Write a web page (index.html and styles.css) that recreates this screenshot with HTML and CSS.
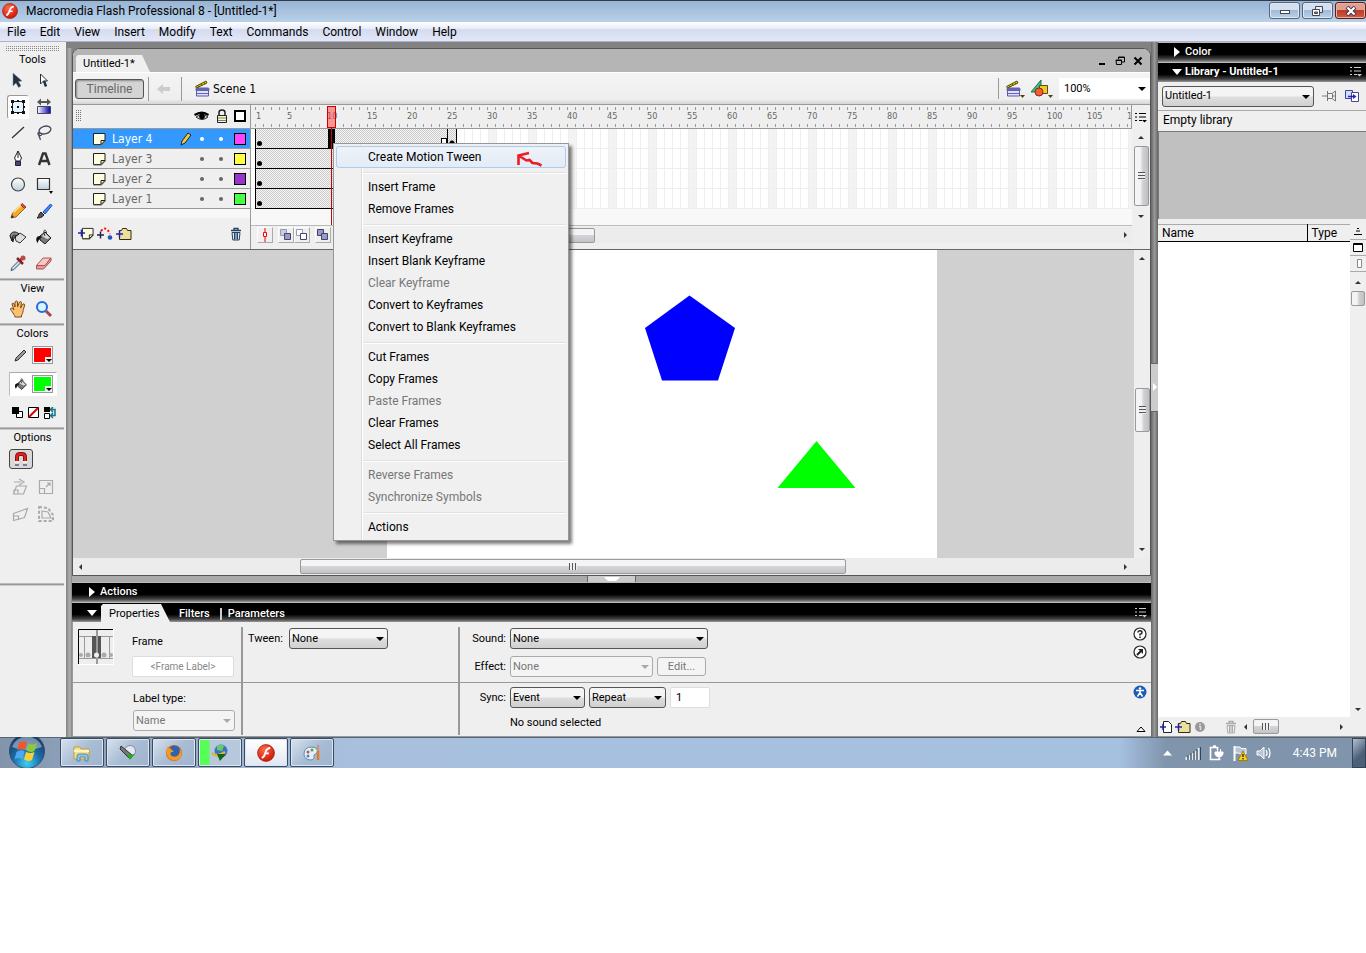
FILE: index.html
```html
<!DOCTYPE html>
<html lang="en">
<head>
<meta charset="utf-8">
<title>Macromedia Flash Professional 8 - [Untitled-1*]</title>
<link rel="stylesheet" href="styles.css">
</head>
<body>
<svg class="defs" aria-hidden="true">
  <defs>
    <linearGradient id="g-blue" x1="0" x2="1"><stop offset="0" stop-color="#fff"/><stop offset="1" stop-color="#00a"/></linearGradient>
    <linearGradient id="g-glass" x1="0" y1="0" x2="0" y2="1"><stop offset="0" stop-color="#fff"/><stop offset="1" stop-color="#bcd0dc"/></linearGradient>
    <radialGradient id="g-orb" cx=".5" cy=".85" r=".8"><stop offset="0" stop-color="#3fd0f4"/><stop offset=".5" stop-color="#1b6ca8"/><stop offset="1" stop-color="#17375e"/></radialGradient>
    <radialGradient id="g-red" cx=".4" cy=".3" r=".8"><stop offset="0" stop-color="#ff6a4a"/><stop offset="1" stop-color="#c80c00"/></radialGradient>
    <symbol id="flash" viewBox="0 0 16 16"><circle cx="8" cy="8" r="7.5" fill="url(#g-red)" stroke="#a01000" stroke-width=".6"/><path d="M11.8 3.6C8.6 3.6 8 6 7.3 8.2 6.7 10.300 6 12 4.200 12.200" fill="none" stroke="#fff" stroke-width="1.700"/><path d="M7.500 8.300h3" stroke="#fff" stroke-width="1.600"/></symbol>
    <symbol id="layer" viewBox="0 0 14 14"><path d="M1.500 1.500h11.500v7l-4 4H1.500z" fill="#fffde0" stroke="#222"/><path d="M13 8.500l-4 4V8.500z" fill="#fff8b0" stroke="#222"/><path d="M1.500 13.200h8l4.200-4.500" fill="none" stroke="#776" stroke-width=".8"/></symbol>
    <symbol id="scene" viewBox="0 0 16 17"><path d="M2.500 8h12v8h-12z" fill="#e0e0ff" stroke="#5a5aa8"/><path d="M2 8.500h13v2H2zM3 13.500h11" fill="#6464b4" stroke="#6464b4"/><path d="M1.500 6.500L12 1l1 2L2.500 8z" fill="#d8c800" stroke="#55500a"/><path d="M4 5.500l1 1.500M7 4l1 1.500M10 2.500L11 4" stroke="#55500a"/></symbol>
    <symbol id="list" viewBox="0 0 12 11"><path d="M0 1.500h2M0 5h2M0 8.500h2M4 1.500h7M4 5h7M4 8.500h3" stroke="currentColor"/><path d="M7 8h5L9.500 10.500z" fill="currentColor"/></symbol>
    <symbol id="folder" viewBox="0 0 16 14"><path d="M3.500 3.500h2l1-2h4l1 2h3.500v9H3.500z" fill="#ece0a0" stroke="#332c10"/><path d="M0 7h7M3.500 3.500v7" stroke="#2424a0" stroke-width="1.500"/></symbol>
    <symbol id="trash" viewBox="0 0 12 14"><path d="M1 3.500h10M4 3V1.500h4V3" fill="none" stroke="currentColor" stroke-width="1.300"/><path d="M2 5.500h8l-.8 7.500H2.800zM4.500 6v6.500M6 6v6.500M7.500 6v6.500" fill="none" stroke="currentColor"/></symbol>
    <symbol id="bucket" viewBox="0 0 18 18"><path d="M5 8l5-4 6 6-6 6-5-4z" fill="#777" stroke="#222"/><path d="M7 8l3-3 5 5-3 1z" fill="#ddd"/><path d="M10 8C7 1 11 .5 11.500 5" fill="none" stroke="#333"/><path d="M5 8C0 8 1 13 2.500 15 4 12 4 11 7 9z" fill="#111"/></symbol>
  </defs>
</svg>

<div class="app">
  <header class="titlebar">
    <svg class="i16"><use href="#flash"/></svg>
    <h1>Macromedia Flash Professional 8 - [Untitled-1*]</h1>
    <div class="winbtns">
      <button aria-label="Minimize"><svg width="12" height="10"><rect x="1.500" y="4.500" width="9" height="3" fill="#fff" stroke="#445"/></svg></button>
      <button aria-label="Restore"><svg width="13" height="12"><path d="M4.500 1.500h7v6h-7z" fill="#eee" stroke="#445"/><path d="M1.500 4.500h7v6h-7z" fill="#fff" stroke="#445"/><path d="M3.500 7h3v1.500h-3z" fill="#8aa" stroke="#445"/></svg></button>
      <button class="close" aria-label="Close"><svg width="12" height="10"><path d="M2 1l8 8M10 1L2 9" stroke="#435" stroke-width="4"/><path d="M2.500 1.500l7 7M9.500 1.500l-7 7" stroke="#fff" stroke-width="2.200"/></svg></button>
    </div>
  </header>
  <nav class="menubar">
    <button>File</button><button>Edit</button><button>View</button><button>Insert</button><button>Modify</button><button>Text</button><button>Commands</button><button>Control</button><button>Window</button><button>Help</button>
  </nav>

  <div class="workspace">
    <aside class="tools">
      <div class="grip"></div>
      <h2>Tools</h2>
      <div class="toolgrid">
        <button aria-label="Selection"><svg viewBox="0 0 18 18"><path d="M4 1l9 8-3.500.5L12 14l-2.500 1.500L7 11l-3 3z" fill="#223040" stroke="#8090a0" stroke-width=".5"/></svg></button>
        <button aria-label="Subselection"><svg viewBox="0 0 18 18"><path d="M5.500 2l7 7H8.500l-3 3z" fill="#fff" stroke="#223040"/><path d="M9 9l2 5.500" stroke="#223040" stroke-width="2.500"/></svg></button>
        <button class="on" aria-label="Free transform"><svg viewBox="0 0 18 18"><path d="M3.500 3.500h11v11h-11z" fill="#e4f4fc" stroke="#222"/><path d="M2 2h3v3H2zM13 2h3v3h-3zM2 13h3v3H2zM13 13h3v3h-3zM8 2h2v2h-2zM8 14h2v2h-2zM2 8h2v2H2zM14 8h2v2h-2zM8 8h2v2h-2z" fill="#111"/></svg></button>
        <button aria-label="Gradient transform"><svg viewBox="0 0 18 18"><path d="M2.500 8.500h13v7h-13z" fill="url(#g-blue)" stroke="#446"/><path d="M5 4h8" stroke="#555" stroke-width="2"/><path d="M6 .5v7L2 4zM12 .5v7L16 4z" fill="#555"/></svg></button>
        <button aria-label="Line"><svg viewBox="0 0 18 18"><path d="M3 14L15 3" stroke="#333" stroke-width="1.300"/></svg></button>
        <button aria-label="Lasso"><svg viewBox="0 0 18 18"><ellipse cx="10" cy="6" rx="6" ry="3.800" fill="none" stroke="#445" stroke-width="1.300" transform="rotate(-15 10 6)"/><path d="M4 8c-3 2 1 5 2.500 3S3 8 4 12s2 2 1 4" fill="none" stroke="#445" stroke-width="1.200"/></svg></button>
        <button aria-label="Pen"><svg viewBox="0 0 18 18"><path d="M9 1l3.500 7-1.500 3H7L5.500 8z" fill="#fff" stroke="#222"/><path d="M9 1v7" stroke="#222"/><path d="M6.500 11.500h5v4h-5z" fill="#448" stroke="#223"/></svg></button>
        <button aria-label="Text"><svg viewBox="0 0 18 18"><path d="M4 15L8 3.500h2.500L14.500 15M6 11h6.500" fill="none" stroke="#333" stroke-width="2.400"/></svg></button>
        <button aria-label="Oval"><svg viewBox="0 0 18 18"><circle cx="9" cy="8.500" r="6.500" fill="url(#g-glass)" stroke="#444" stroke-width="1.200"/></svg></button>
        <button aria-label="Rectangle"><svg viewBox="0 0 18 18"><path d="M2.500 2.500h12v11h-12z" fill="url(#g-glass)" stroke="#333" stroke-width="1.200"/><path d="M14 15h4l-2 3z"/></svg></button>
        <button aria-label="Pencil"><svg viewBox="0 0 18 18"><path d="M2 16l1.500-5L12 3l3.500 3.500L7 15z" fill="#f8a820" stroke="#864"/><path d="M4.500 10.500l8-7.500" stroke="#ffe080" stroke-width="1.500"/><path d="M12 3l1-1.500 4 3.500-1.500 1.500z" fill="#e05040" stroke="#933"/><path d="M2 16l1-3 2 2z" fill="#222"/></svg></button>
        <button aria-label="Brush"><svg viewBox="0 0 18 18"><path d="M8 10l7.500-8 1.500 1.500-7 8.500z" fill="#48f" stroke="#114cc0"/><path d="M2 16c2-1 1-4 4-6l3 3c-2 3-5 3-7 3z" fill="#555" stroke="#222"/></svg></button>
        <button aria-label="Ink bottle"><svg viewBox="0 0 18 18"><path d="M6 9l5-4 6 4-6 6-4-2z" fill="#ddd" stroke="#333"/><path d="M6 9c-4-1-3 3-2 5 0-3 1-4 3-5z" fill="#777" stroke="#111"/><path d="M1 8c1-5 6-5 9-2L7 8C4 6 3 8 3 13z" fill="#888" stroke="#111"/></svg></button>
        <button aria-label="Paint bucket"><svg viewBox="0 0 18 18"><use href="#bucket"/></svg></button>
        <button aria-label="Eyedropper"><svg viewBox="0 0 18 18"><path d="M2 16.500l1-3 7-7 2 2-7 7z" fill="#bfe0f4" stroke="#456"/><path d="M8 4l6 6M10.500 7.500L14 3" stroke="#822" stroke-width="2.500"/><circle cx="14" cy="4" r="2.500" fill="#c04848"/></svg></button>
        <button aria-label="Eraser"><svg viewBox="0 0 18 18"><path d="M1.500 11.500L8 4h8l-6 7.500z" fill="#f8c8c8" stroke="#a55"/><path d="M1.500 11.500V15h7l7.500-8V4l-6 7.500z" fill="#e89898" stroke="#a55"/></svg></button>
      </div>
      <hr>
      <h2>View</h2>
      <div class="toolgrid view">
        <button aria-label="Hand"><svg viewBox="0 0 18 18"><path d="M6 17C5 13 1 10 1.500 8.500 3 7.500 4 9 5 10L3 4c1-2 2-1 3 3V2c1-1.500 2.500-1 2.500 0v5L10.500 2c1.500-1 2 0 2 1l-1 5 2.500-4c1.500-.5 2 .5 1.500 2-2 5-1 7-3 9v2z" fill="#fcc070" stroke="#7a4a18"/></svg></button>
        <button aria-label="Zoom"><svg viewBox="0 0 18 18"><path d="M11 11l5 5" stroke="#a34848" stroke-width="3"/><circle cx="7" cy="7" r="5" fill="#d8f4ff" stroke="#2868d8" stroke-width="2"/></svg></button>
      </div>
      <hr>
      <h2>Colors</h2>
      <div class="colorrow">
        <svg class="i14" viewBox="0 0 14 14"><path d="M1 13l1-3 8-8 2 2-8 8z" fill="#999" stroke="#333"/></svg>
        <button class="swatch red" aria-label="Stroke color"></button>
      </div>
      <div class="colorrow fill">
        <svg class="i14" viewBox="0 0 18 18"><use href="#bucket"/></svg>
        <button class="swatch green" aria-label="Fill color"></button>
      </div>
      <div class="minis">
        <button aria-label="Black and white"><svg width="11" height="11"><path d="M4.500 4.500h6v6h-6z" fill="#fff" stroke="#000"/><path d="M0 0h7v7H0z"/></svg></button>
        <button aria-label="No color"><svg width="11" height="11"><path d="M.5.5h10v10H.5z" fill="#fff" stroke="#000"/><path d="M1 10l9-9" stroke="#d00" stroke-width="2"/></svg></button>
        <button aria-label="Swap colors"><svg width="13" height="12"><path d="M0 0h6v5H0z"/><path d="M.5 6.500h5v5h-5z" fill="#fff" stroke="#000"/><path d="M6 2.500h5v6H7M9 0L6.500 2.500 9 5M9 6L6.500 8.500 9 11" fill="none" stroke="#178" stroke-width="1.500"/></svg></button>
      </div>
      <hr>
      <h2>Options</h2>
      <div class="toolgrid opts">
        <button class="snap" aria-label="Snap to objects"><svg viewBox="0 0 18 18"><path d="M5 13V7q0-3 3-3h2q3 0 3 3v6" fill="none" stroke="#8c1010" stroke-width="4"/><path d="M5 11V7q0-3 3-3h2q3 0 3 3v4" fill="none" stroke="#e42020" stroke-width="2"/><path d="M3 12h4M11 12h4" stroke="#eee" stroke-width="2"/><path d="M4 14v2M6 14v2M12 14v2M14 14v2" stroke="#225"/></svg></button><i></i>
        <button disabled aria-label="Rotate and skew"><svg viewBox="0 0 18 18"><path d="M2.500 16l3-8h10l-3 8zM3 4h7M8 1l5 3-5 3M3 16v-4h4v4" fill="none" stroke="#aaa" stroke-width="1.200"/></svg></button>
        <button disabled aria-label="Scale"><svg viewBox="0 0 18 18"><path d="M2.500 2.500h13v13h-13zM2.500 10.500h5v5M9 9l4-4M10 5h3v3" fill="none" stroke="#aaa" stroke-width="1.200"/></svg></button>
        <button disabled aria-label="Distort"><svg viewBox="0 0 18 18"><path d="M2.500 8.500l14-5-3 9-11 3zM2.500 11h5v4" fill="none" stroke="#aaa" stroke-width="1.200"/></svg></button>
        <button disabled aria-label="Envelope"><svg viewBox="0 0 18 18"><path d="M2 2l9 1 5 7v6H2z" fill="none" stroke="#aaa" stroke-width="2" stroke-dasharray="3 2"/><path d="M5 6l6 1 3 6H5z" fill="none" stroke="#aaa" stroke-width="1.200"/></svg></button>
      </div>
      <hr class="last">
    </aside>

    <main class="center">
      <section class="doc">
        <div class="tabbar">
          <button class="doctab">Untitled-1*</button>
          <div class="docbtns">
            <button aria-label="Minimize document"><svg width="10" height="10"><path d="M2 8h6" stroke="#000" stroke-width="2"/></svg></button>
            <button aria-label="Restore document"><svg width="10" height="10"><path d="M3.500 3V1h6v5H7M3 1.500h6.500M1 4.500h6M1 4h5.500v4.500h-5z" fill="none" stroke="#000"/></svg></button>
            <button aria-label="Close document"><svg width="10" height="10"><path d="M1.500 1.500l7 7M8.500 1.500l-7 7" stroke="#000" stroke-width="2"/></svg></button>
          </div>
        </div>
        <div class="editbar">
          <button class="timelinebtn">Timeline</button>
          <button class="back" disabled aria-label="Back"><svg width="14" height="12"><path d="M0 6l6-5v3h7v4H6v3z" fill="#ccc"/></svg></button>
          <svg class="sceneicon"><use href="#scene"/></svg>
          <span class="scenename">Scene 1</span>
          <div class="editright">
            <button aria-label="Edit scene"><svg width="20" height="18"><use href="#scene" width="16" height="17"/><path d="M15 15h5l-2.500 3z" fill="#554400"/></svg></button>
            <button aria-label="Edit symbols"><svg width="22" height="18"><path d="M0 12L10 0v12z" fill="#38c080" stroke="#174"/><path d="M8.500 5.500h8v8h-8z" fill="#e8d020" stroke="#642"/><circle cx="8" cy="12" r="4" fill="#f06030" stroke="#922"/><path d="M17 15h5l-2.500 3z" fill="#554400"/></svg></button>
            <span class="sel zoom"><select aria-label="Zoom level"><option>100%</option></select></span>
          </div>
        </div>

        <div class="timeline">
          <div class="layers">
            <div class="layerhead">
              <span class="dotgrip"></span>
              <svg width="16" height="12" viewBox="0 0 16 12"><path d="M0 4Q8-1 15 4l-1 2Q8 2 1 6z"/><path d="M2 7q6-5 12 0-6 5-12 0z" fill="#ccc" stroke="#333"/><circle cx="8" cy="6.500" r="2.800"/></svg>
              <svg width="12" height="14" viewBox="0 0 12 14"><path d="M3 6V3.500Q3 1 6 1t3 2.500V6" fill="none" stroke="#222" stroke-width="1.500"/><path d="M1.500 6.500h9v7h-9z" fill="#fff8b0" stroke="#222"/><path d="M2 9h8M2 11.500h8" stroke="#58a"/></svg>
              <b class="box"></b>
            </div>
            <div class="layer active"><svg class="i14"><use href="#layer"/></svg><span>Layer 4</span><svg class="pen" width="12" height="14" viewBox="0 0 12 14"><path d="M1 13l1-4 6-8 3 2-6 8z" fill="#f8c840" stroke="#222"/></svg><i></i><i></i><b class="box magenta"></b></div>
            <div class="layer"><svg class="i14"><use href="#layer"/></svg><span>Layer 3</span><i></i><i></i><b class="box yellow"></b></div>
            <div class="layer"><svg class="i14"><use href="#layer"/></svg><span>Layer 2</span><i></i><i></i><b class="box purple"></b></div>
            <div class="layer"><svg class="i14"><use href="#layer"/></svg><span>Layer 1</span><i></i><i></i><b class="box lime"></b></div>
            <div class="layerfoot">
              <button aria-label="Insert layer"><svg width="16" height="14"><use href="#layer" x="3" width="13" height="13"/><path d="M0 6h7M3.500 2.500v7" stroke="#2424a0" stroke-width="1.500"/></svg></button>
              <button aria-label="Add motion guide"><svg width="16" height="14"><path d="M4 4Q9-2 13 7" fill="none" stroke="#f00" stroke-width="2" stroke-dasharray="2 2"/><path d="M0 8h7M3.500 4.500v7" stroke="#222250" stroke-width="1.500"/><circle cx="13" cy="10.500" r="2.300" fill="#25b"/></svg></button>
              <button aria-label="Insert folder"><svg width="16" height="14"><use href="#folder"/></svg></button>
              <button class="push" aria-label="Delete layer"><svg width="12" height="14" color="#246"><use href="#trash"/></svg></button>
            </div>
          </div>
          <div class="frames">
            <div class="ruler"><span class="first">1</span><span>5</span><span>10</span><span>15</span><span>20</span><span>25</span><span>30</span><span>35</span><span>40</span><span>45</span><span>50</span><span>55</span><span>60</span><span>65</span><span>70</span><span>75</span><span>80</span><span>85</span><span>90</span><span>95</span><span>100</span><span>105</span><span class="end">1</span></div>
            <div class="track"><div class="span"><i></i><b class="cur"></b><b class="endbox"></b><b class="key"></b></div></div>
            <div class="track"><div class="span"><i></i></div></div>
            <div class="track"><div class="span"><i></i></div></div>
            <div class="track"><div class="span"><i></i></div></div>
            <div class="framefoot">
              <button aria-label="Center frame"><svg width="12" height="14"><path d="M6 0v14" stroke="#f00"/><path d="M4.500 4.500h3v4h-3z" fill="#fff" stroke="#f00"/></svg></button>
              <button class="gap" aria-label="Onion skin"><svg width="12" height="12"><path d="M.5.5h6v6h-6z" fill="#ccd" stroke="#99b"/><path d="M4.500 4.500h6v6h-6z" fill="#99c" stroke="#446"/></svg></button>
              <button aria-label="Onion skin outlines"><svg width="12" height="12"><path d="M.5.5h6v6h-6z" fill="#fff" stroke="#99b"/><path d="M4.500 4.500h6v6h-6z" fill="#fff" stroke="#446"/></svg></button>
              <button class="gap" aria-label="Edit multiple frames"><svg width="12" height="12"><path d="M.5.5h6v6h-6z" fill="#99c" stroke="#446"/><path d="M4.500 4.500h6v6h-6z" fill="#99c" stroke="#446"/></svg></button>
              <div class="hscroll short"><span class="thumb"></span><em class="ar right"></em></div>
            </div>
            <div class="playhead"></div>
          </div>
          <div class="framescroll">
            <button aria-label="Frame view"><svg width="12" height="11"><use href="#list"/></svg></button>
            <em class="ar up"></em><span class="thumb v"></span><em class="ar down"></em>
          </div>
        </div>

        <div class="stagewrap">
          <div class="stage">
            <svg class="canvas" width="550" height="308" role="img" aria-label="Stage">
              <path d="M302.500 45.500L348 78l-17 52.500h-56L258 78z" fill="#00f"/>
              <path d="M429.500 191L468.500 238h-78z" fill="#0f0"/>
            </svg>
          </div>
          <div class="vscroll"><em class="ar up"></em><span class="thumb v"></span><em class="ar down"></em></div>
        </div>
        <div class="hscroll long"><em class="ar left"></em><span class="thumb"></span><em class="ar right"></em></div>
      </section>

      <div class="collapse"><button aria-label="Collapse panels"></button></div>

      <section class="panelhead"><em class="tri r"></em><h2>Actions</h2></section>
      <section>
        <div class="panelhead">
          <em class="tri d"></em>
          <button class="ptab on">Properties</button><button class="ptab">Filters</button><button class="ptab bar">Parameters</button>
          <svg class="opt" width="12" height="11" color="#ccc"><use href="#list"/></svg>
        </div>
        <div class="props">
          <div class="prop1">
            <svg width="36" height="36"><path d="M0 0h36v36H0z" fill="#fff"/><path d="M0 0h35v35H0z" fill="#eee"/><path d="M.5 35V.5H35" fill="none" stroke="#000"/><path d="M1 7.500h34M1 29.500h34M6.500 8v21M31.500 8v21" stroke="#999"/><path d="M14 7h9v22h-9z" fill="#555"/><path d="M19 1v34" stroke="#999" stroke-width="2"/><g fill="#aaa"><circle cx="3" cy="26" r="2"/><circle cx="10" cy="26" r="2.500"/><circle cx="26" cy="26" r="2.500"/><circle cx="33" cy="26" r="2"/></g><circle cx="18.500" cy="26" r="2.500" fill="#eee"/></svg>
            <div class="stack"><label for="flabel">Frame</label><input id="flabel" class="field flabel" placeholder="&lt;Frame Label&gt;"></div>
          </div>
          <div class="prop2"><label for="tween">Tween:</label><span class="sel w99"><select id="tween"><option>None</option></select></span></div>
          <div class="prop3">
            <div class="line"><label for="sound">Sound:</label><span class="sel w198"><select id="sound"><option>None</option></select></span></div>
            <div class="line"><label for="effect">Effect:</label><span class="sel w143 dis"><select id="effect" disabled><option>None</option></select></span><button class="edit" disabled>Edit...</button></div>
          </div>
          <div class="side">
            <button aria-label="Help"><svg width="14" height="14"><circle cx="7" cy="7" r="6" fill="#fff" stroke="#222" stroke-width="1.200"/><path d="M5 5.500Q5 3.800 7 3.800t2 1.700Q9 7 7 7.200V8.500M7 9.500v1.500" fill="none" stroke="#222" stroke-width="1.500"/></svg></button>
            <button aria-label="Edit ActionScript"><svg width="14" height="14"><circle cx="7" cy="7" r="6" fill="#fff" stroke="#222" stroke-width="1.200"/><path d="M4 10l4-4" stroke="#222" stroke-width="2"/><path d="M5 4h5v5z" fill="#222"/></svg></button>
          </div>
          <div class="prop1 low"><div class="stack"><label for="ltype">Label type:</label><span class="sel w102 dis"><select id="ltype" disabled><option>Name</option></select></span></div></div>
          <div class="prop2"></div>
          <div class="prop3 low">
            <div class="line"><label for="sync">Sync:</label><span class="sel w75"><select id="sync"><option>Event</option></select></span><span class="sel w77"><select aria-label="Loop mode"><option>Repeat</option></select></span><input class="field num" value="1" aria-label="Repeat count"></div>
            <p>No sound selected</p>
          </div>
          <div class="side low">
            <button aria-label="Accessibility"><svg width="14" height="14"><circle cx="7" cy="7" r="6.500" fill="#1c5cb4"/><circle cx="7" cy="3.500" r="1.300" fill="#fff"/><path d="M3 5.500h8M7 5v3M7 7.500l-2.500 4M7 7.500l2.500 4" stroke="#fff" stroke-width="1.500"/></svg></button>
            <button aria-label="Collapse properties"><svg width="14" height="6"><path d="M4 5.500h8L8 1z" fill="#fff" stroke="#000"/></svg></button>
          </div>
        </div>
      </section>
    </main>

    <div class="gutter"><button aria-label="Collapse side panels"></button></div>

    <aside class="library">
      <div class="panelhead"><em class="tri r"></em><h2>Color</h2></div>
      <div class="panelhead"><em class="tri d"></em><h2 class="bold">Library - Untitled-1</h2><svg class="opt" width="12" height="11" color="#ccc"><use href="#list"/></svg></div>
      <div class="libsel">
        <span class="sel"><select aria-label="Library document"><option>Untitled-1</option></select></span>
        <button aria-label="Pin library"><svg width="15" height="12"><path d="M0 6h5M5.500 1v10M5.500 3.500h5v5h-5M13.500 1v10M10.500 3l3-2M10.500 9l3 2M10.500 6h3" fill="none" stroke="#777"/></svg></button>
        <button aria-label="New library panel"><svg width="15" height="12"><path d="M.5.500h7v8h-7z" fill="#cdf" stroke="#448"/><path d="M6.500 2.500h7v9h-7z" fill="#fff" stroke="#448"/><path d="M3 6.500h6" stroke="#22c" stroke-width="1.500"/><path d="M8 4v5L11.500 6.500z" fill="#22c"/></svg></button>
      </div>
      <p class="empty">Empty library</p>
      <div class="preview"></div>
      <div class="list">
        <table><thead><tr><th class="name">Name</th><th>Type</th></tr></thead></table>
        <div class="listside">
          <button aria-label="Sort"><svg width="10" height="9"><path d="M4 1.500h2M3 4h4M1 7.500h8" stroke="#000" stroke-width="1.200"/></svg></button>
          <button aria-label="Wide view"><svg width="10" height="9"><path d="M.5.500h9v8h-9z" fill="#fff" stroke="#000"/><path d="M0 1.500h10" stroke="#000"/></svg></button>
          <button aria-label="Narrow view"><svg width="10" height="9"><path d="M4.500.500h4v8h-4z" fill="#fff" stroke="#888"/></svg></button>
          <em class="ar up"></em><span class="thumb v"></span><em class="ar down"></em>
        </div>
      </div>
      <div class="libfoot">
        <button aria-label="New symbol"><svg width="12" height="13"><path d="M3.500 1.500h5l3 3v8h-8z" fill="#fff" stroke="#222"/><path d="M0 7h6M3 4v6" stroke="#2424a0" stroke-width="1.500"/></svg></button>
        <button aria-label="New folder"><svg width="16" height="14"><use href="#folder"/></svg></button>
        <button aria-label="Item properties"><svg width="12" height="12"><circle cx="6" cy="6" r="5" fill="#999"/><path d="M6 2.500v1.500M5 5.500h1.500V9" fill="none" stroke="#ddd" stroke-width="1.500"/></svg></button>
        <button class="del" aria-label="Delete item"><svg width="12" height="14" color="#aaa"><use href="#trash"/></svg></button>
        <em class="ar left"></em><span class="thumb"></span><em class="ar right"></em>
      </div>
    </aside>

    <ul class="ctx" role="menu">
      <li><button class="hot">Create Motion Tween<svg width="28" height="16" viewBox="0 0 28 16"><path d="M2.500 14V4.500L13 2M2.500 4.500l8 5 3-.5 3 3 5 .5 4 2" fill="none" stroke="#ed1c24" stroke-width="2.600"/></svg></button></li>
      <li class="sep"></li>
      <li><button>Insert Frame</button></li><li><button>Remove Frames</button></li>
      <li class="sep"></li>
      <li><button>Insert Keyframe</button></li><li><button>Insert Blank Keyframe</button></li><li><button disabled>Clear Keyframe</button></li><li><button>Convert to Keyframes</button></li><li><button>Convert to Blank Keyframes</button></li>
      <li class="sep"></li>
      <li><button>Cut Frames</button></li><li><button>Copy Frames</button></li><li><button disabled>Paste Frames</button></li><li><button>Clear Frames</button></li><li><button>Select All Frames</button></li>
      <li class="sep"></li>
      <li><button disabled>Reverse Frames</button></li><li><button disabled>Synchronize Symbols</button></li>
      <li class="sep"></li>
      <li><button>Actions</button></li>
    </ul>
  </div>

  <footer class="taskbar">
    <button class="start" aria-label="Start"><svg width="38" height="36" viewBox="0 0 38 36"><circle cx="19" cy="18" r="17.500" fill="url(#g-orb)" stroke="#35506e"/><path d="M4 14a15.500 14 0 0 1 30 0q-15 6-30 0z" fill="#fff" opacity=".4"/><path d="M11 10q4-3 8-.5L17 17q-4-2-8 .5z" fill="#f0562c"/><path d="M20.500 10.500q4 2 8.500-.5l-2.500 8q-4 2-8-.5z" fill="#90c83c"/><path d="M8.500 19q4-3 8-.5l-2 7.500q-4-2-8 .5z" fill="#4ca8f0"/><path d="M18 19q4 2 8.500 0L24 27q-4 2-8-.5z" fill="#fcd030"/></svg></button>
    <div class="tasks">
      <button aria-label="Explorer"><svg width="20" height="20"><path d="M2 4h6l1 2h8v10H2z" fill="#f6e08c" stroke="#c4a040"/><path d="M2 8h15" stroke="#fff6c0" stroke-width="2"/><path d="M5 18v-5q0-2 2-2h7q2 0 2 2v5h-3v-4H8v4z" fill="#8cc8ec" stroke="#58a"/></svg></button>
      <button aria-label="Disk tool"><svg width="20" height="20"><circle cx="12" cy="8" r="5.500" fill="#e4e6f0" stroke="#889"/><path d="M3 3l11 9-3 3L2 6z" fill="#777" stroke="#333"/><path d="M9 12l8-1-5 6z" fill="#2a2"/></svg></button>
      <button aria-label="Firefox"><svg width="20" height="20"><circle cx="10" cy="10" r="8" fill="#e06a14"/><circle cx="10.500" cy="8" r="5.500" fill="#2c64b4"/><path d="M3 4q-2 8 3 12 6 3 10-1 3-4 0-9 0 8-6 8-5-1-3-5l3 0-3-3z" fill="#f49a24"/></svg></button>
      <button class="prog" aria-label="Download manager"><svg width="20" height="20"><circle cx="11" cy="8" r="6.500" fill="#3c74c4"/><path d="M7 3q4-3 7 0l-2 5-5-1z" fill="#6c6"/><path d="M2 10q5 5 13-1" fill="none" stroke="#dcb43c" stroke-width="2.500"/><path d="M7 11h9l-6 7z" fill="#161"/></svg></button>
      <button class="cur-task" aria-label="Flash"><svg class="i18"><use href="#flash"/></svg></button>
      <button aria-label="Paint"><svg width="20" height="20"><path d="M2 11q0-7 8-7 7 1 5 6-2 1-3 2 1 5-4 5-6-1-6-6z" fill="#e4f0f8" stroke="#68a"/><circle cx="6" cy="9" r="1.500" fill="#d44"/><circle cx="10" cy="7" r="1.500" fill="#4a4"/><circle cx="6" cy="13" r="1.500" fill="#48c"/><path d="M16 2v6" stroke="#b98" stroke-width="2.500"/><path d="M16 8v9" stroke="#e87820" stroke-width="2.500"/></svg></button>
    </div>
    <div class="tray">
      <svg width="10" height="6"><path d="M0 5.500h9L4.500.500z" fill="#fff"/></svg>
      <svg width="16" height="13"><path d="M1.500 10v3M4.500 8v5M7.500 6v7M10.500 4v9M13.500 1v12" stroke="#e8ecf2" stroke-width="2"/><path d="M3 8v5M6 6v7M9 4v9M12 2v11M15.500 0v13" stroke="#345"/></svg>
      <svg width="15" height="16"><path d="M8.500 5V2.500h-7v12h9V13M4 1h3" fill="none" stroke="#fff" stroke-width="1.600"/><path d="M6 7h8v2q-1 3-4 3t-4-3zM8.500 4v3M11.500 4v3M10 11v3" fill="#fff" stroke="#fff"/></svg>
      <svg width="16" height="16"><path d="M2.500 1v15" stroke="#fff" stroke-width="2"/><path d="M3 2h5l1 1.500h5V9H8L7 8H3z" fill="#b8c4d4" stroke="#fff"/><path d="M11 6l5 9.500H6z" fill="#fcd020" stroke="#a88000"/><path d="M11 9v3M11 13v1.500" stroke="#222" stroke-width="1.300"/></svg>
      <svg width="16" height="14"><path d="M1 5h3l4-4v12L4 9H1z" fill="#b8c4d4" stroke="#fff"/><path d="M10 4q2 3 0 6M12.500 2q3 5 0 10" fill="none" stroke="#fff" stroke-width="1.300"/></svg>
      <time>4:43 PM</time>
    </div>
    <button class="desk" aria-label="Show desktop"></button>
  </footer>
</div>
</body>
</html>
```
FILE: styles.css
```css
* { box-sizing: border-box; }
body { margin: 0; background: #fff; font: 12px/16px Roboto, "Open Sans", sans-serif; color: #000; }
button, input, select { font: inherit; color: inherit; margin: 0; }
button { border: 0; padding: 0; background: none; display: block; }
button svg { display: block; }
h1, h2, p, ul { margin: 0; padding: 0; font-size: 12px; font-weight: 400; }
ul { list-style: none; }
.defs { position: absolute; width: 0; height: 0; }
.i14 { width: 14px; height: 14px; }
.i16 { width: 16px; height: 16px; }
.i18 { width: 18px; height: 18px; }

.app { display: flex; flex-direction: column; }

/* Title and menu */
.titlebar { display: flex; align-items: center; height: 22px; padding: 0 0 2px 2px; gap: 8px; border-top: 1px solid #333a44; background: linear-gradient(#98b4d4, #b9d1ea); }
.winbtns { display: flex; gap: 2px; margin-left: auto; }
.winbtns button { width: 31px; height: 17px; display: grid; place-items: center; border: 1px solid #56677c; border-radius: 3px; background: linear-gradient(#d2e0f0 45%, #a4bad4 50%, #b8d0ea); box-shadow: inset 0 0 0 1px #dce8f4; }
.winbtns .close { background: linear-gradient(#e0a090 45%, #bc3c28 50%, #d05c40); border-color: #5c1c18; box-shadow: inset 0 0 0 1px #e8b0a4; }
.menubar { display: flex; align-items: center; gap: 14px; height: 20px; padding: 0 7px; background: linear-gradient(#fff, #e8ecf8 35%, #d4dbef 40%, #e2e8f8); border-bottom: 1px solid #b0b4c4; }

.workspace { display: flex; position: relative; min-height: 695px; background: #828282; }

/* Tools */
.tools { width: 66px; flex: none; padding: 4px 0 0; background: #efefef; }
.tools h2 { text-align: center; padding-right: 1px; height: 17px; font-size: 11px; line-height: 17px; }
.grip { margin: 0 6px; height: 5px; background: repeating-conic-gradient(#efefef 0 75%, #888 0 100%) 0 0 / 2px 2px; }
.tools hr + h2 { height: 15px; line-height: 13px; }
.toolgrid { display: grid; grid-template-columns: 26px 26px; grid-auto-rows: 26px; justify-content: start; padding-left: 5px; }
.toolgrid.view { grid-auto-rows: 24px; }
.toolgrid button { display: grid; place-items: center; }
.toolgrid svg { width: 18px; height: 18px; }
.toolgrid .on { margin: 1px 2px; background: #fff; border: 1px solid #aaa; border-color: #999 #fff #fff #999; border-radius: 3px; }
.toolgrid.opts { grid-auto-rows: 27px; padding-left: 7px; }
.opts .snap { margin: 3px 0 4px 2px; border: 1px solid #444; border-radius: 3px; background: #d8d8d8; }
.tools hr { margin: 2px 2px 1px 0; border: 0; height: 3px; background: linear-gradient(#ddd, #999 34% 67%, #fff); }
.tools .last { margin-top: 56px; }
.colorrow { display: flex; align-items: center; gap: 4px; height: 26px; margin: 0 9px; padding-left: 5px; }
.colorrow.fill { background: #fff; border: 1px solid #bbb; border-color: #aaa #fff #fff #bbb; height: 24px; margin-top: 4px; padding-left: 4px; }
.swatch { position: relative; width: 21px; height: 18px; border: 2px solid #fff; outline: 1px solid #999; outline-offset: -1px; }
.swatch::before { content: ""; position: absolute; right: -1px; bottom: -1px; width: 7px; height: 6px; background: #efefef; }
.swatch::after { content: ""; position: absolute; right: -1px; bottom: 0; border: 3px solid transparent; border-top-color: #000; border-bottom: 0; }
.red { background: #f00; }
.green { background: #0f0; }
.minis { display: flex; gap: 5px; height: 29px; padding: 4px 0 0 12px; }

/* Centre column */
.center { flex: 1; min-width: 0; margin: 6px 0 0; padding-left: 6px; background: linear-gradient(90deg, #828282, #b0b0b0 4px, #828282 6px); }
.doc { border: 1px solid #555; border-radius: 8px 8px 0 0; background: #efefef; overflow: hidden; }
.tabbar { display: flex; justify-content: space-between; align-items: flex-end; height: 23px; background: #b5b5b5; padding: 0 7px 0 3px; }
.doctab { height: 17px; width: 74px; padding-left: 7px; text-align: left; background: #efefef; clip-path: polygon(0 2px, 2px 0, 66px 0, 100% 100%, 0 100%); font-size: 11px; line-height: 16px; }
.docbtns { display: flex; gap: 8px; padding-bottom: 6px; }
.editbar { display: flex; align-items: center; height: 33px; padding-left: 2px; border-top: 1px solid #fff; border-bottom: 1px solid #999; background: linear-gradient(#f4f4f4, #eee 85%, #d4d4d4); }
.timelinebtn { width: 69px; height: 20px; border: 1px solid #555; border-radius: 3px; background: #d4d4d4; color: #666; box-shadow: inset 1px 1px 2px #888; }
.back { margin-left: 4px; padding: 6px 10px 6px 8px; border: solid #999; border-width: 0 1px; }
.sceneicon { width: 16px; height: 17px; margin-left: 12px; }
.scenename { margin-left: 3px; font-family: "DejaVu Sans Condensed", "DejaVu Sans", sans-serif; }
.editright { display: flex; align-items: center; gap: 6px; margin-left: auto; padding-left: 6px; border-left: 1px solid #999; }
.sel { position: relative; display: block; }
.sel select { appearance: none; width: 100%; height: 21px; padding: 0 2px; border: 1px solid #555; border-radius: 3px; background: linear-gradient(#f4f4f4 45%, #ddd 55%, #d0d0d0); font-size: 11px; }
.sel::after { content: ""; position: absolute; right: 4px; top: 9px; border: 4px solid transparent; border-top-color: #000; border-bottom: 0; pointer-events: none; }
.sel.dis select { border-color: #aaa; background: #f4f4f4; color: #777; opacity: 1; }
.sel.dis::after { border-top-color: #aaa; }
.zoom { width: 91px; }
.zoom select { border: 0; border-radius: 0; background: #fff; padding-left: 5px; }

/* Scroll parts */
.ar { display: block; flex: none; width: 0; height: 0; border: 3px solid transparent; }
.ar.up { border-bottom-color: #333; border-top: 0; }
.ar.down { border-top-color: #333; border-bottom: 0; }
.ar.left { border-right-color: #333; border-left: 0; }
.ar.right { border-left-color: #333; border-right: 0; }
.thumb { display: grid; place-items: center; height: 15px; border: 1px solid #999; border-radius: 2px; background: linear-gradient(#f4f4f4 45%, #d4d4d8 50%, #c4c4c8); }
.thumb::after { content: ""; width: 8px; height: 7px; background: repeating-linear-gradient(90deg, #555 0 1px, #eee 1px 3px); }
.thumb.v { width: 15px; height: auto; background: linear-gradient(90deg, #f4f4f4 40%, #d0d0d4 60%, #c0c0c4); }
.thumb.v::after { width: 7px; height: 8px; background: repeating-linear-gradient(#555 0 1px, #eee 1px 3px); }

/* Timeline */
.timeline { display: flex; border-bottom: 1px solid #666; height: 145px; }
.layers { width: 178px; flex: none; border-right: 1px solid #999; display: flex; flex-direction: column; background: #f8f8f8; }
.layerhead { display: flex; align-items: center; gap: 6px; height: 24px; padding: 0 4px 2px 3px; background: #efefef; border-bottom: 1px solid #999; }
.dotgrip { width: 5px; height: 12px; margin-right: auto; background: repeating-conic-gradient(#efefef 0 75%, #777 0 100%) 0 0 / 2px 2px; }
.box { width: 12px; height: 12px; border: 2px solid #000; background: #fff; }
.layer { display: flex; align-items: center; height: 20px; padding: 1px 4px 0 19px; border-bottom: 1px solid #999; background: #efefef; color: #666; font: 12px/18px "DejaVu Sans Condensed", "DejaVu Sans", sans-serif; }
.layer span { margin: 0 auto 0 6px; }
.layer .pen { margin-right: 8px; }
.layer i { width: 4px; height: 4px; border-radius: 2px; background: currentColor; margin-right: 15px; }
.layer i + i { margin-right: 11px; }
.layer .box { border-width: 1px; }
.layer.active { background: #39f; color: #fff; }
.magenta { background: #f4f; }
.yellow { background: #ff4; }
.purple { background: #93c; }
.lime { background: #4f4; }
.layerfoot { display: flex; align-items: center; gap: 3px; margin-top: auto; height: 31px; padding: 0 8px 0 5px; background: #efefef; }
.push { margin-left: auto; }
.frames { flex: 1; min-width: 0; position: relative; display: flex; flex-direction: column; background: #f8f8f8; }
.ruler { display: flex; height: 24px; padding-left: 5px; overflow: hidden; border-bottom: 1px solid #999; border-right: 1px solid #999; color: #666; font: 9px/23px "DejaVu Sans Condensed", "DejaVu Sans", sans-serif; background: repeating-linear-gradient(90deg, #999 0 1px, transparent 1px 8px) 4px 2px / 100% 3px no-repeat, repeating-linear-gradient(90deg, #999 0 1px, transparent 1px 8px) 4px 19px / 100% 3px no-repeat, #efefef; }
.ruler span { flex: 0 0 40px; }
.ruler .first { flex-basis: 31px; }
.ruler .end { flex-basis: 5px; }
.track { height: 20px; padding-left: 4px; border-bottom: 1px solid #eee; background: repeating-linear-gradient(90deg, #fff 0 32px, #f3f3f3 32px 40px) 5px 0 / 100% 100% no-repeat, #fff; position: relative; }
.track::before { content: ""; position: absolute; inset: 0 0 0 5px; background: repeating-linear-gradient(90deg, #eee 0 1px, transparent 1px 8px); }
.span { position: relative; width: 202px; height: 20px; border: 1px solid #000; border-top: 0; background: repeating-conic-gradient(#ccc 0 25%, #f4f4f4 0 50%) 0 0 / 2px 2px; }
.span i { position: absolute; left: 1px; top: 12px; width: 5px; height: 5px; border-radius: 3px; background: #000; }
.cur { position: absolute; left: 72px; top: 0; width: 7px; height: 19px; background: #000; }
.endbox { position: absolute; left: 185px; top: 9px; width: 6px; height: 9px; border: 1px solid #000; background: #fff; }
.key { position: absolute; right: 0; top: 0; width: 9px; height: 19px; border-left: 1px solid #000; background: radial-gradient(circle at 4px 14px, #000 2px, transparent 3px); }
.playhead { position: absolute; left: 76px; top: 1px; width: 9px; height: 22px; border: 1px solid #c00; background: rgba(255, 60, 60, .5); }
.playhead::after { content: ""; position: absolute; left: 3px; top: 20px; width: 1px; height: 98px; background: #c00; }
.framefoot { display: flex; align-items: flex-start; margin-top: auto; height: 24px; padding: 1px 0 0 6px; border-top: 1px solid #bbb; background: #efefef; }
.framefoot button { display: grid; place-items: center; width: 16px; height: 16px; border: 1px solid #aaa; border-color: #fff #aaa #aaa #fff; }
.framefoot .gap { margin-left: 5px; }
.hscroll { display: flex; align-items: center; height: 16px; background: #ececec; }
.hscroll.short { flex: 1; padding: 0 5px 0 64px; justify-content: space-between; }
.short .thumb { width: 200px; }
.framescroll { width: 18px; flex: none; display: flex; flex-direction: column; align-items: center; }
.framescroll button { padding: 7px 0 13px 0; }
.framescroll .thumb { height: 60px; margin: 7px 0 9px; }

/* Stage */
.stagewrap { display: flex; }
.stage { flex: 1; min-width: 0; overflow: hidden; padding-left: 314px; background: #d0d0d0; }
.canvas { display: block; background: #fff; }
.vscroll { width: 16px; flex: none; display: flex; flex-direction: column; align-items: center; justify-content: space-between; padding: 7px 0; background: #eee; }
.vscroll .thumb { height: 44px; margin-top: 12px; }
.long { padding: 0 23px 0 6px; height: 17px; }
.long .thumb { width: 546px; margin: 0 auto 0 218px; }
.collapse { height: 6px; background: #aaa; }
.collapse button { margin: 0 auto; width: 49px; height: 6px; background: #ccc; border: solid #666; border-width: 0 1px; }
.collapse button::after { content: ""; display: block; width: 8px; margin: 0 auto; border: 4px solid transparent; border-top-color: #fff; border-bottom: 0; }

/* Panels */
.panelhead { display: flex; align-items: center; height: 20px; padding: 0 0 2px 14px; border-top: 1px solid #bbb; background: linear-gradient(#000 60%, #444 85%, #999); color: #fff; }
.panelhead h2, .ptab { font-size: 11px; }
.panelhead h2, .ptab:not(.on) { font-weight: 500; }
.panelhead .bold { font-weight: 700; }
.tri { width: 0; height: 0; border: 5px solid transparent; }
.tri.r { border-left: 6px solid #fff; border-right: 0; margin: 0 5px 0 3px; }
.tri.d { border-top: 6px solid #fff; border-bottom: 0; margin-right: 4px; }
.opt { margin-left: auto; margin-right: 4px; }
section > .panelhead { padding-bottom: 0; padding-left: 15px; }
.ptab { height: 18px; padding: 0 10px 0 9px; line-height: 20px; }
.ptab.on { align-self: flex-end; width: 69px; padding: 0 0 0 8px; text-align: left; color: #000; background: #efefef; clip-path: polygon(0 2px, 2px 0, 60px 0, 100% 100%, 0 100%); }
.ptab.bar { padding: 0 0 0 8px; background: linear-gradient(#ccc, #ccc) 0 4px / 2px 12px no-repeat; }
.props { display: grid; grid-template-columns: 168px 217px 1fr 20px; grid-template-rows: 56px 52px; padding: 5px 0 1px; background: #efefef; border: solid #999; border-width: 0 0 1px 1px; font-size: 11px; }
.props > :nth-child(-n+4) { border-bottom: 1px solid #999; }
.prop1 { display: flex; gap: 18px; padding: 2px 0 0 5px; }
.prop1.low { padding: 8px 0 0 60px; }
.stack { display: flex; flex-direction: column; gap: 6px; padding-top: 5px; }
.low .stack { gap: 3px; padding: 0; }
.field { height: 21px; border: 1px solid #ddd; border-radius: 2px; background: #fff; }
.flabel { width: 102px; text-align: center; font-size: 10px; padding: 0; }
.flabel::placeholder { color: #888; opacity: 1; }
.num { width: 40px; padding: 0 5px; }
.prop2, .prop3 { display: flex; border-left: 2px solid #999; }
.prop2 { padding: 1px 0 0 5px; gap: 5px; align-items: flex-start; }
.prop2 label { line-height: 21px; width: 36px; }
.prop3 { flex-direction: column; gap: 7px; padding-top: 1px; }
.prop3.low { padding-top: 4px; gap: 7px; }
.line { display: flex; gap: 4px; align-items: center; }
.line label { width: 46px; text-align: right; }
.prop3 p { padding-left: 50px; font-size: 11px; }
.edit { width: 49px; height: 19px; border: 1px solid #aaa; border-radius: 3px; background: #f4f4f4; color: #777; }
.w75 { width: 75px; }
.w77 { width: 77px; }
.w99 { width: 99px; }
.w102 { width: 102px; }
.w143 { width: 143px; }
.w198 { width: 198px; }
.side { display: flex; flex-direction: column; gap: 4px; padding-left: 2px; }
.side.low { justify-content: space-between; padding: 2px 0 3px 2px; }

/* Right column */
.gutter { width: 7px; flex: none; display: flex; align-items: center; background: linear-gradient(90deg, #666, #999 50%, #666); }
.gutter button { width: 7px; height: 49px; margin-bottom: 5px; background: #ccc; border: solid #666; border-width: 1px 0; }
.gutter button::after { content: ""; display: block; width: 0; margin-left: 2px; border: 4px solid transparent; border-left-color: #fff; border-right: 0; }
.library { width: 208px; flex: none; display: flex; flex-direction: column; background: #efefef; }
.library .tri.r { margin: 0 5px 0 2px; }
.library .tri.d { margin-right: 3px; }
.libsel { display: flex; align-items: center; gap: 8px; height: 29px; padding: 0 6px 0 4px; border-bottom: 1px solid #aaa; }
.libsel .sel { flex: 1; }
.empty { height: 20px; padding-left: 5px; line-height: 19px; }
.preview { height: 88px; background: #c0c0c0; border: 1px solid #777; border-width: 1px 0 0 1px; }
.list { flex: 1; display: flex; align-items: flex-start; margin-top: 5px; background: #fff; }
.list table { flex: 1; border-collapse: collapse; background: #efefef; }
.list th { height: 17px; padding: 0 0 0 4px; text-align: left; font-weight: 400; line-height: 15px; border-top: 1px solid #aaa; border-bottom: 1px solid #000; }
.list .name { width: 149px; border-right: 1px solid #000; }
.listside { align-self: stretch; width: 16px; display: flex; flex-direction: column; align-items: center; background: #efefef; }
.listside button { display: grid; place-items: center; width: 16px; height: 16px; border-bottom: 1px solid #aaa; }
.listside .up { margin-top: 9px; }
.listside .thumb { height: 15px; margin-top: 7px; width: 14px; }
.listside .thumb::after, .short .thumb::after { display: none; }
.listside .down { margin: auto 0 6px; }
.libfoot { display: flex; align-items: center; gap: 3px; height: 20px; padding: 0 23px 0 2px; border-bottom: 1px solid #999; }
.libfoot .del { margin: 0 4px 0 16px; }
.libfoot .thumb { width: 26px; margin: 0 auto 0 3px; }

/* Context menu */
.ctx { position: absolute; left: 333px; top: 101px; width: 236px; padding: 2px; border: 1px solid #979797; background: linear-gradient(90deg, transparent 27px, #ddd 27px 28px, #fff 28px 29px, transparent 29px) #f0f0f0; box-shadow: 3px 3px 3px rgba(0, 0, 0, .5); }
.ctx button { display: flex; align-items: center; width: 100%; height: 22px; padding-left: 31px; border: 1px solid transparent; }
.ctx button:disabled { color: #777; }
.ctx .hot { border: 1px solid #aaccf0; border-radius: 3px; background: linear-gradient(#eef2f8, #e4ecf6); }
.ctx svg { margin: 4px 21px 0 auto; }
.sep { height: 8px; margin-left: 28px; background: linear-gradient(#e0e0e0 0 1px, #fff 1px 2px) 0 4px / 100% 2px no-repeat; }

/* Taskbar */
.taskbar { display: flex; height: 31px; border-top: 1px solid #567; background: linear-gradient(90deg, #8294aa, #8c9fb8 60px, #a8c0de 350px, #a6c0e0 calc(100% - 246px), #8094ac calc(100% - 200px)); }
.start { width: 60px; padding-left: 8px; margin-top: -5px; }
.tasks { display: flex; gap: 2px; }
.tasks button { display: grid; place-items: center; width: 44px; height: 29px; border: 1px solid #3c4c60; border-radius: 2px; background: linear-gradient(135deg, #d8e2ee, #a8bcd4 50%, #a0b4ce); box-shadow: inset 0 0 0 1px #dce6f2; }
.tasks .cur-task { background: linear-gradient(#fff, #dfe7f1); }
.tasks .prog { background: linear-gradient(90deg, #5f5 0 10px, #b8c8dc 11px); }
.tray { display: flex; align-items: center; gap: 8px; margin-left: auto; color: #fff; }
.tray svg:first-child { margin-right: 4px; }
.tray time { margin: 0 7px 0 13px; }
.desk { width: 14px; margin-left: 8px; border: 1px solid #345; background: linear-gradient(135deg, #b0c0d0, #4c6078 60%); }
```
